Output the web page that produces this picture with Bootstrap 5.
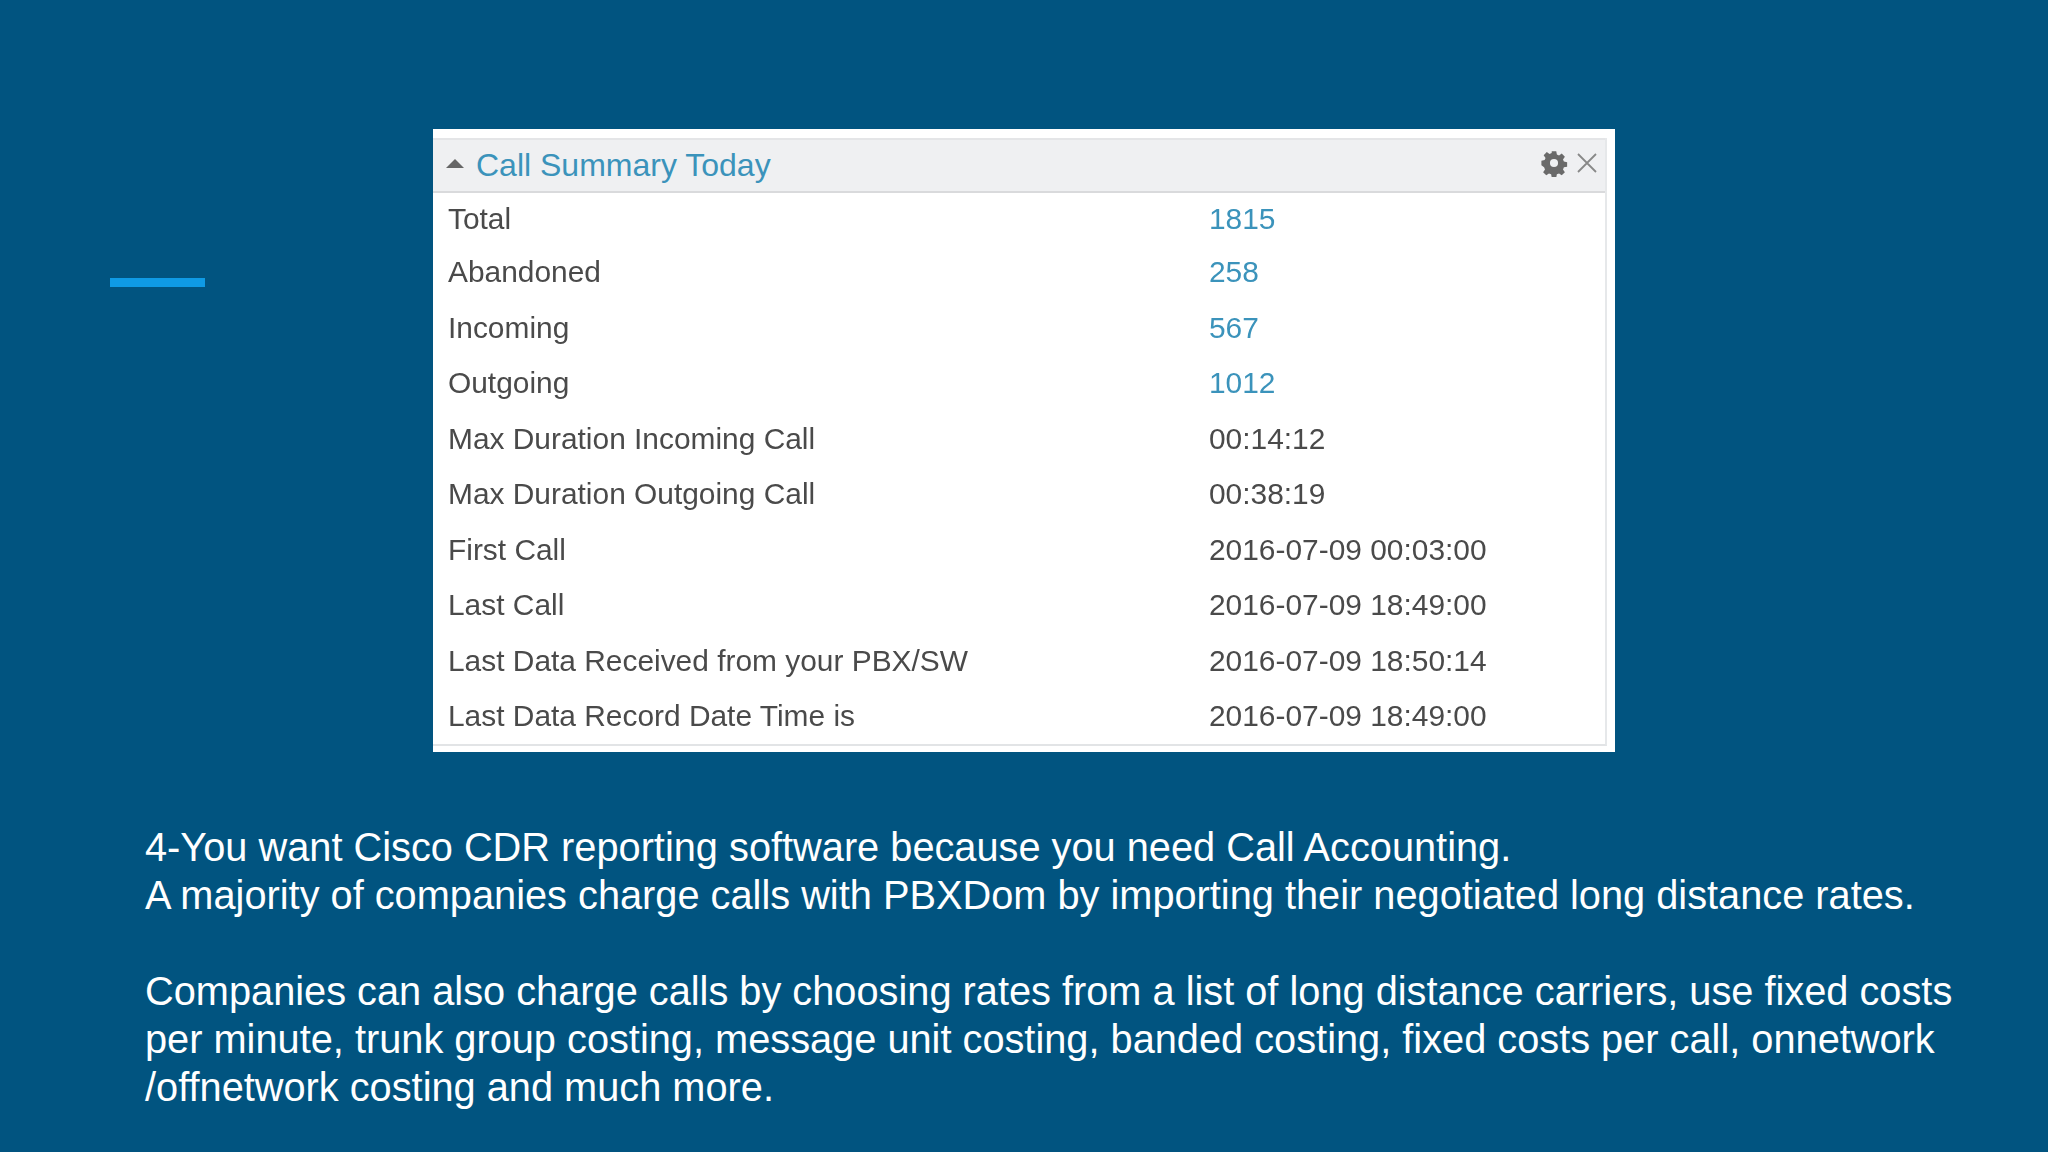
<!DOCTYPE html>
<html lang="en">
<head>
<meta charset="utf-8">
<title>Call Summary</title>
<link href="https://cdn.jsdelivr.net/npm/bootstrap@5.3.0/dist/css/bootstrap.min.css" rel="stylesheet">
<style>
html,body{margin:0;background:#015480;}
.slide{width:2048px;height:1152px;background:#015480;font-family:"Liberation Sans",Arial,sans-serif;overflow:hidden;}
.top-zone{padding:129px 0 0 110px;}
.accent{width:95px;height:9px;background:#0f9ae4;margin-top:149px;margin-right:228px;flex:none;}
.shot{width:1182px;height:623px;background:#fff;padding:9px 8px 6px 0;flex:none;}
.shot-inner{height:100%;border-bottom:2px solid #e2e4e6;border-right:2px solid #e6e8ea;filter:blur(.45px);}
.shot-head{height:55px;background:#eff0f2;border-top:2px solid #e4e5e7;border-bottom:2px solid #d9dadc;padding:0 7px 0 13px;}
.caret{width:0;height:0;border-left:9px solid transparent;border-right:9px solid transparent;border-bottom:9px solid #666;margin-right:12px;margin-top:-4px;}
.shot-title{font-size:32px;color:#3b93bb;line-height:1;margin-top:-2px;}
.tools{margin-top:-6px;}
.summary{width:100%;font-size:29.9px;color:#4a4a4a;}
.summary .lab{padding-left:15px;width:776px;}
.summary td{height:55.5px;padding:0;vertical-align:middle;line-height:1;}
.summary tr:first-child td{height:51px;}
.summary tr:nth-child(2) td{height:56px;padding-bottom:1px;}
.summary a{color:#3b93bb;text-decoration:none;}
.copy{margin:71px 0 0 145px;color:#fff;font-size:39.75px;line-height:48px;white-space:nowrap;}
.copy p{margin:0 0 48px;}
</style>
</head>
<body>
<div class="slide">
  <div class="top-zone d-flex align-items-start">
    <div class="accent"></div>
    <div class="shot">
      <div class="shot-inner">
        <div class="shot-head d-flex align-items-center">
          <span class="caret"></span>
          <span class="shot-title flex-grow-1">Call Summary Today</span>
          <span class="tools d-flex align-items-center gap-2">
            <svg width="28" height="28" viewBox="0 0 28 28" aria-hidden="true"><path fill="#6a6a6a" fill-rule="evenodd" d="M11.5 1h5l.7 3.6 2.4 1 3-2.1 3.5 3.5-2.1 3 1 2.4 3.6.7v5l-3.6.7-1 2.4 2.1 3-3.5 3.5-3-2.1-2.4 1-.7 3.6h-5l-.7-3.6-2.4-1-3 2.1-3.5-3.500 2.100-3-1-2.400L0 16.500v-5l3.600-.7 1-2.400-2.100-3L6 1.900l3 2.100 2.400-1zM14 9.500a4.500 4.500 0 1 0 0 9 4.500 4.500 0 0 0 0-9z" transform="translate(1.400 1.400) scale(.9)"/></svg>
            <svg width="22" height="22" viewBox="0 0 22 22" aria-hidden="true"><path d="M2 2l18 18M20 2L2 20" stroke="#888" stroke-width="1.800" fill="none"/></svg>
          </span>
        </div>
        <table class="summary">
          <tbody>
            <tr><td class="lab">Total</td><td><a href="#">1815</a></td></tr>
            <tr><td class="lab">Abandoned</td><td><a href="#">258</a></td></tr>
            <tr><td class="lab">Incoming</td><td><a href="#">567</a></td></tr>
            <tr><td class="lab">Outgoing</td><td><a href="#">1012</a></td></tr>
            <tr><td class="lab">Max Duration Incoming Call</td><td>00:14:12</td></tr>
            <tr><td class="lab">Max Duration Outgoing Call</td><td>00:38:19</td></tr>
            <tr><td class="lab">First Call</td><td>2016-07-09 00:03:00</td></tr>
            <tr><td class="lab">Last Call</td><td>2016-07-09 18:49:00</td></tr>
            <tr><td class="lab">Last Data Received from your PBX/SW</td><td>2016-07-09 18:50:14</td></tr>
            <tr><td class="lab">Last Data Record Date Time is</td><td>2016-07-09 18:49:00</td></tr>
          </tbody>
        </table>
      </div>
    </div>
  </div>
  <div class="copy">
    <p>4-You want Cisco CDR reporting software because you need Call Accounting.<br>A majority of companies charge calls with PBXDom by importing their negotiated long distance rates.</p>
    <p>Companies can also charge calls by choosing rates from a list of long distance carriers, use fixed costs<br>per minute, trunk group costing, message unit costing, banded costing, fixed costs per call, onnetwork<br>/offnetwork costing and much more.</p>
  </div>
</div>
<script src="https://cdn.jsdelivr.net/npm/bootstrap@5.3.0/dist/js/bootstrap.bundle.min.js"></script>
</body>
</html>
